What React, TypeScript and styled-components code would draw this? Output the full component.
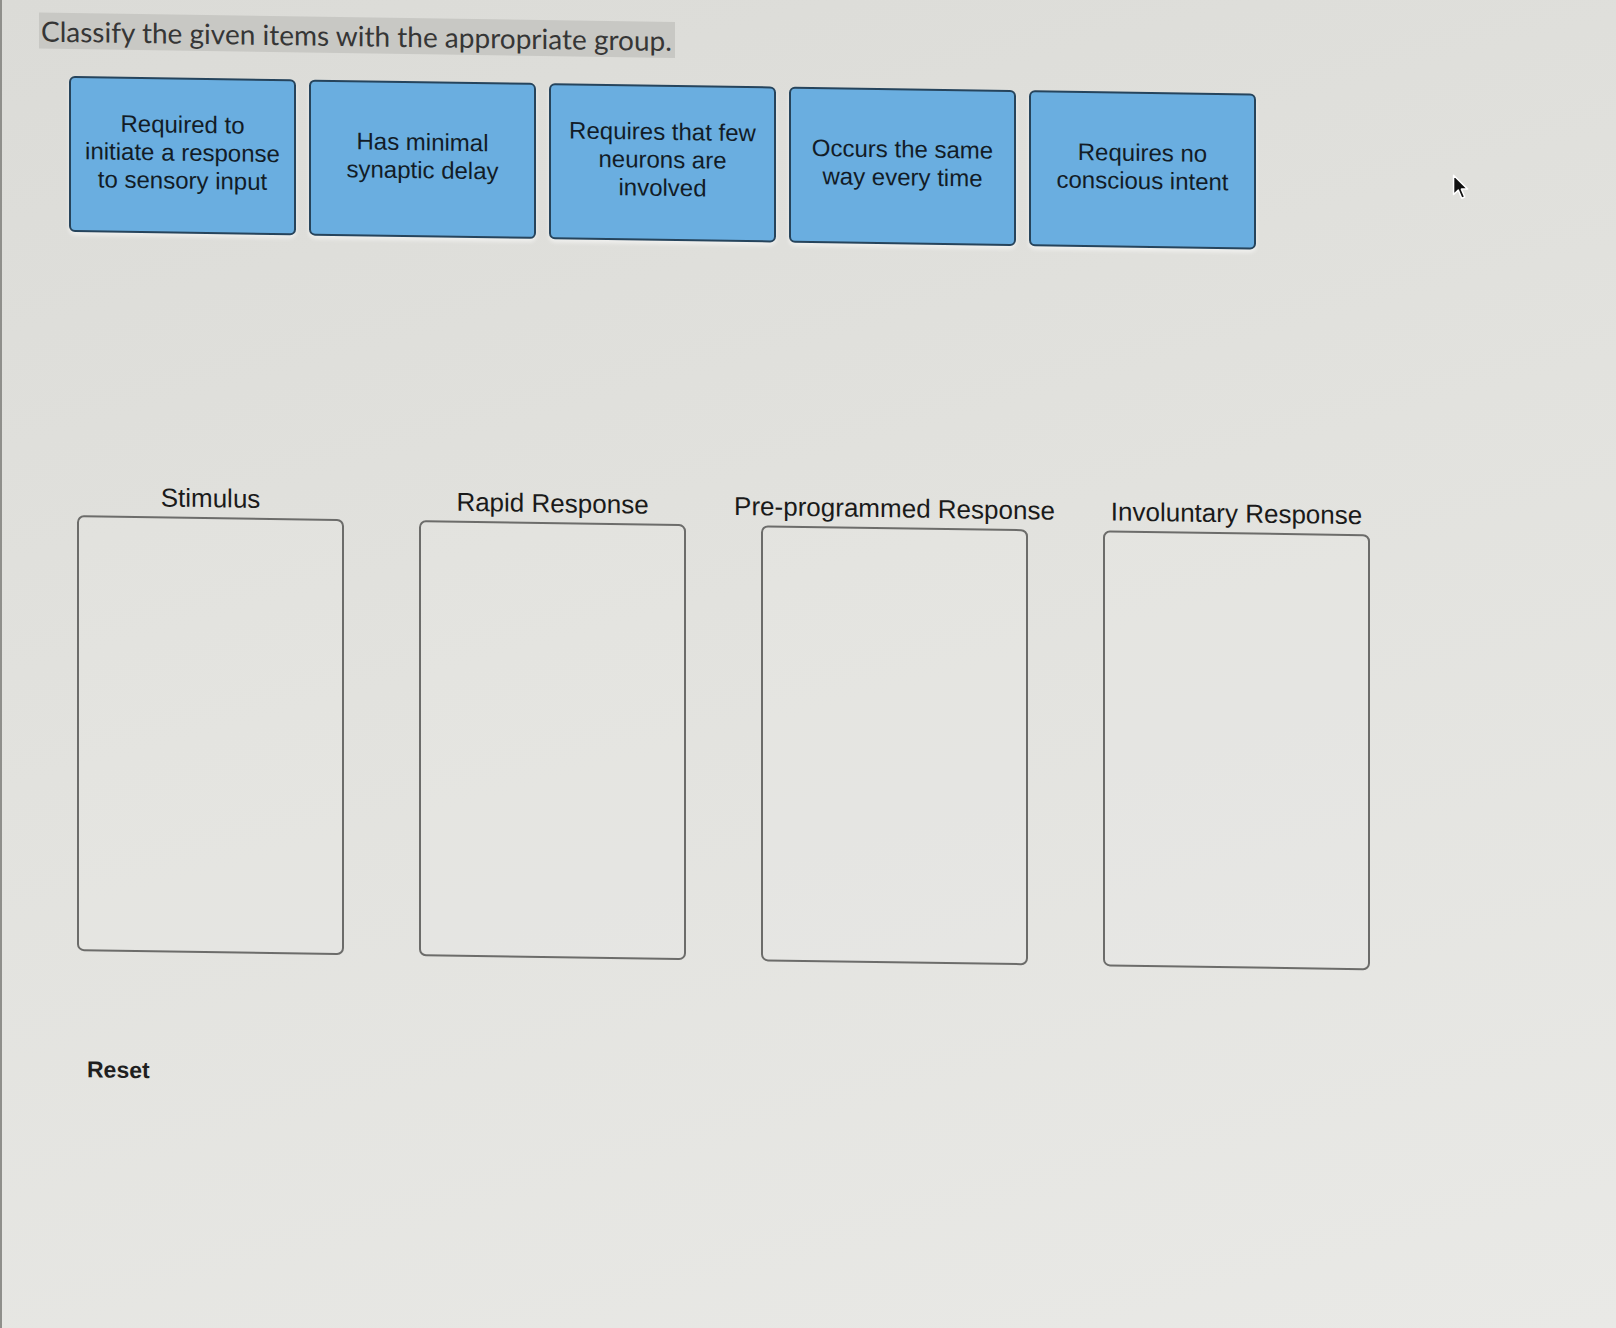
import React from "react"
import styled, { createGlobalStyle } from "styled-components"

const items = [
  ["Required to", "initiate a response", "to sensory input"],
  ["Has minimal", "synaptic delay"],
  ["Requires that few", "neurons are", "involved"],
  ["Occurs the same", "way every time"],
  ["Requires no", "conscious intent"],
]

const groups = ["Stimulus", "Rapid Response", "Pre-programmed Response", "Involuntary Response"]

const GlobalStyle = createGlobalStyle`
  html, body {
    margin: 0;
    padding: 0;
  }
  body {
    font-family: "Liberation Sans", Arial, sans-serif;
    background: #e1e1dd;
  }
`

const Page = styled.div`
  position: relative;
  min-height: 1328px;
  box-sizing: border-box;
  overflow: hidden;
  background: linear-gradient(165deg, #dbdbd7 0%, #e2e2de 45%, #e9e9e6 100%);
  box-shadow: inset 2px 0 0 #8f8f8b;
`

const Sheet = styled.div`
  transform: skewY(0.85deg);
  transform-origin: 0 0;
  padding: 12px 0 0 39px;
`

const Title = styled.h1`
  display: inline-block;
  margin: 0;
  padding: 0 3px 0 2px;
  background: #c8c8c4;
  color: #363636;
  font-family: Lato, "Open Sans", sans-serif;
  font-weight: 400;
  font-size: 28px;
  line-height: 36px;
`

const CardRow = styled.div`
  display: flex;
  gap: 13px;
  margin: 27px 0 0 30px;
`

const Card = styled.div`
  width: 227px;
  height: 156px;
  box-sizing: border-box;
  display: flex;
  align-items: center;
  justify-content: center;
  text-align: center;
  background: #6aaee0;
  border: 2px solid #26445c;
  border-radius: 6px;
  box-shadow: 0 3px 4px rgba(255, 255, 255, 0.55);
  color: #121c27;
  font-size: 24px;
  line-height: 28px;
  padding-bottom: 6px;
`

const GroupRow = styled.div`
  display: flex;
  gap: 75px;
  margin: 249px 0 0 38px;
`

const Group = styled.div`
  width: 267px;
  display: flex;
  flex-direction: column;
  align-items: center;
`

const GroupLabel = styled.div`
  font-size: 26px;
  line-height: 30px;
  color: #1a1a1a;
  white-space: nowrap;
  margin-bottom: 4px;
`

const DropBox = styled.div`
  width: 100%;
  height: 436px;
  box-sizing: border-box;
  border: 2px solid #6c6c6a;
  border-radius: 7px;
  background: rgba(255, 255, 255, 0.07);
`

const ResetButton = styled.button`
  display: block;
  margin: 104px 0 0 48px;
  padding: 0;
  border: none;
  background: none;
  color: #1f1f1f;
  font-family: "Liberation Sans", Arial, sans-serif;
  font-weight: 700;
  font-size: 23px;
  line-height: 28px;
  cursor: pointer;
`

const Pointer = styled.svg`
  position: absolute;
  left: 1452px;
  top: 174px;
  width: 18px;
  height: 26px;
`

function App() {
  return (
    <Page>
      <GlobalStyle />
      <Sheet>
        <Title>Classify the given items with the appropriate group.</Title>
        <CardRow>
          {items.map((lines, i) => (
            <Card key={i}>
              <div>
                {lines.map((line, j) => (
                  <div key={j}>{line}</div>
                ))}
              </div>
            </Card>
          ))}
        </CardRow>
        <GroupRow>
          {groups.map(name => (
            <Group key={name}>
              <GroupLabel>{name}</GroupLabel>
              <DropBox />
            </Group>
          ))}
        </GroupRow>
        <ResetButton>Reset</ResetButton>
      </Sheet>
      <Pointer viewBox="0 0 14 21">
        <path
          d="M1 1 L1 16.5 L4.8 13 L7.6 19.6 L10 18.6 L7.3 12.2 L12.4 12.2 Z"
          fill="#111"
          stroke="#fff"
          strokeWidth="1.2"
          strokeLinejoin="round"
        />
      </Pointer>
    </Page>
  )
}

export default App
